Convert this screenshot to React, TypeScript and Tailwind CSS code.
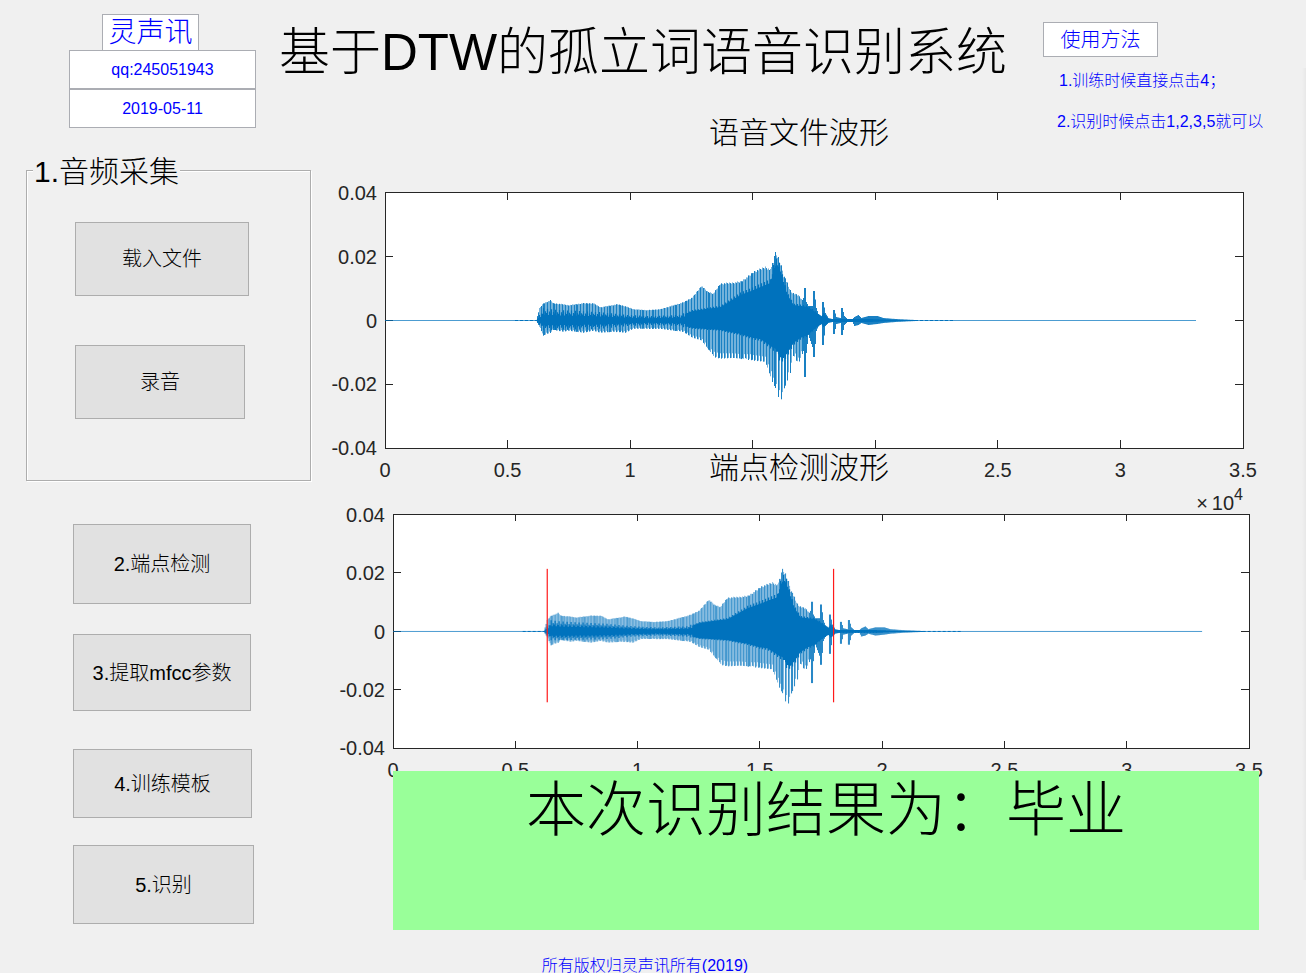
import { ReactNode } from "react"
import clsx from "clsx"

const W = 858
const H = 256
const MID = 128

const xTicks = ["0", "0.5", "1", "1.5", "2", "2.5", "3", "3.5"]
const yTicks = ["0.04", "0.02", "0", "-0.02", "-0.04"]

// [x, height above zero, depth below zero]
type Point = [number, number, number]

const outer: Point[] = [
  [0, 0, 0], [151, 0, 0], [154, 12, 6], [158, 17, 15], [165, 20, 12], [168, 17, 9],
  [178, 16, 11], [183, 15, 10], [197, 17, 12], [208, 17, 10], [215, 13, 12], [232, 16, 11],
  [240, 14, 12], [248, 11, 8], [262, 10, 8], [275, 11, 8], [288, 15, 10], [298, 18, 11],
  [307, 23, 17], [316, 35, 20], [322, 29, 28], [328, 27, 36], [335, 37, 38], [348, 38, 38],
  [355, 39, 39], [365, 46, 39], [368, 49, 40], [380, 54, 42], [385, 51, 57], [388, 60, 63],
  [390, 68, 67], [391, 68, 70], [393, 63, 76], [397, 52, 79], [398, 45, 70], [401, 40, 62],
  [405, 30, 52], [408, 27, 35], [413, 25, 43], [417, 20, 33], [418, 22, 30], [419, 32, 56],
  [420, 32, 56], [421, 18, 32], [423, 14, 14], [427, 14, 26], [428, 29, 36], [429, 29, 36],
  [431, 12, 10], [433, 6, 5], [436, 4, 3], [437, 18, 24], [438, 18, 24], [440, 7, 5],
  [443, 2, 2], [447, 1, 1], [448, 10, 13], [449, 10, 13], [451, 3, 3], [455, 2, 2],
  [456, 12, 14], [457, 12, 14], [459, 4, 4], [462, 1, 1], [467, 1, 1], [469, 3, 5],
  [473, 5, 4], [476, 2, 2], [483, 4, 4], [492, 4, 3], [498, 2, 2], [510, 1, 1], [530, 0, 0], [811, 0, 0],
]

const inner: Point[] = [
  [0, 0, 0], [151, 0, 0], [158, 9, 7], [168, 8, 7], [215, 6, 6], [240, 4, 4], [265, 3, 3],
  [295, 4, 4], [307, 9, 7], [335, 13, 9], [355, 25, 13], [368, 30, 17], [375, 33, 18],
  [385, 37, 25], [388, 50, 27], [391, 56, 28], [394, 52, 36], [398, 38, 37], [402, 25, 32],
  [408, 15, 22], [415, 14, 17], [422, 13, 14], [430, 8, 7], [436, 3, 3], [438, 7, 6],
  [443, 1, 1], [483, 1, 1], [510, 0, 0], [811, 0, 0],
]

function sample(points: Point[], x: number) {
  let i = 1
  while (i < points.length - 1 && points[i][0] < x) i++
  const [x0, up0, down0] = points[i - 1]
  const [x1, up1, down1] = points[i]
  const t = (x - x0) / (x1 - x0)
  return [up0 + (up1 - up0) * t, down0 + (down1 - down0) * t]
}

// One vertical stroke per column: strong peaks, softer ones between them, and a solid core
function buildWave() {
  let strong = ""
  let soft = ""
  let core = ""
  for (let x = 152; x <= 530; x++) {
    const [up, down] = sample(outer, x)
    const [coreUp, coreDown] = sample(inner, x)
    const jitter = 1 - ((x * 37) % 11) / 220
    const px = x + 0.5
    const stroke = (u: number, d: number) => `M${px} ${(MID - u).toFixed(1)}V${(MID + d + 1).toFixed(1)}`
    const isPeak = x % 3 === 0 || x % 11 === 4 || up < 5 || x > 417
    if (isPeak) strong += stroke(x > 386 ? up : up * jitter, x > 386 ? down : down * jitter)
    else if (x > 386 && x < 409) soft += stroke(up * 0.95, down * (x % 3 === 1 ? 0.9 : 0.4))
    else soft += stroke(up * jitter, down * (x % 3 === 1 ? 0.97 : 0.85))
    // the quiet lead-in is striped rather than solid
    const scale = x < 300 ? [1, 0.6, 1.3, 0.8][(x * 7) % 4] : [1, 1.1, 1][x % 3]
    core += stroke(coreUp * scale, coreDown * scale)
  }
  return { strong, soft, core }
}

const wave = buildWave()

function Axes({ markers = [] }: { markers?: number[] }) {
  let ticks = ""
  for (let i = 1; i < 7; i++) {
    const x = (i * W) / 7
    ticks += `M${x} 0V8M${x} ${H}V${H - 8}`
  }
  for (let i = 1; i < 4; i++) {
    const y = (i * H) / 4
    ticks += `M0 ${y}H8M${W} ${y}H${W - 8}`
  }
  return (
    <svg
      viewBox={`0 0 ${W} ${H}`}
      preserveAspectRatio="none"
      className="block h-full w-full overflow-visible bg-white"
      fill="none"
      strokeWidth={1}
      aria-hidden="true"
    >
      <g stroke="#262626" shapeRendering="crispEdges">
        <path d={`M0 0H${W}V${H}H0Z`} vectorEffect="non-scaling-stroke" />
        <path d={ticks} vectorEffect="non-scaling-stroke" />
      </g>
      <g stroke="#0072bd">
        <path d={`M0 ${MID + 0.5}H811`} vectorEffect="non-scaling-stroke" strokeOpacity={0.7} />
        <path d={`M130 ${MID + 0.5}H570`} vectorEffect="non-scaling-stroke" strokeDasharray="3 2" />
        <path d={wave.soft} strokeOpacity={0.55} />
        <path d={wave.strong} strokeOpacity={0.9} />
        <path d={wave.core} strokeWidth={1.2} />
      </g>
      {markers.map((x) => (
        <rect key={x} x={x} y={60} width={1.2} height={146} fill="#ff1a1a" />
      ))}
    </svg>
  )
}

type PlotProps = {
  height: string
  markers?: number[]
  labels?: string[]
  exponent?: ReactNode
}

function Plot({ height, markers, labels = xTicks, exponent }: PlotProps) {
  return (
    <div className="flex text-[20px] leading-6 text-[#262626]">
      <div className={clsx("flex w-[73px] shrink-0 flex-col justify-between pr-2 text-right", height)}>
        {yTicks.map((t) => (
          <span key={t} className="flex h-0 items-center justify-end pt-px">{t}</span>
        ))}
      </div>
      <div className="min-w-0 flex-1">
        <div className={height}>
          <Axes markers={markers} />
        </div>
        <div className="flex h-9 justify-between pt-[10px]">
          {labels.map((t, i) => (
            <span key={i} className="flex w-0 justify-center">{t}</span>
          ))}
        </div>
        {exponent}
      </div>
    </div>
  )
}

function PushButton({ className, children }: { className: string; children: ReactNode }) {
  return (
    <button
      type="button"
      className={clsx(
        "block border border-[#adadad] bg-[#e1e1e1] text-center text-[20px] text-black hover:border-[#0078d7] hover:bg-[#e5f1fb]",
        className,
      )}
    >
      {children}
    </button>
  )
}

export default function App() {
  return (
    <div className="relative flex min-h-screen flex-col overflow-x-hidden bg-[#f0f0f0] font-['Liberation_Sans','Noto_Sans_CJK_SC',sans-serif] font-light text-black">
      {/* Header */}
      <header className="flex h-[150px] items-start">
        <div className="ml-[69px] flex w-[187px] shrink-0 flex-col pt-[14px] text-center text-[16px] text-[#0000ff]">
          <div className="mx-auto -mb-px h-[37px] w-[97px] -translate-x-3 border border-[#abadb3] bg-white text-[28px] leading-9">
            灵声讯
          </div>
          <div className="h-[39px] border border-[#abadb3] bg-white leading-[38px]">qq:245051943</div>
          <div className="h-[39px] border border-[#abadb3] bg-white leading-[38px]">2019-05-11</div>
        </div>
        <div className="flex flex-1 flex-col pt-[21px]">
          <h1 className="text-center text-[51px] leading-[64px] whitespace-nowrap">基于DTW的孤立词语音识别系统</h1>
          <h2 className="mt-7 ml-[453px] text-[30px] leading-10 whitespace-nowrap">语音文件波形</h2>
        </div>
        <div className="w-[276px] shrink-0 pt-[22px] pl-[13px] text-[16px] text-[#0000ff]">
          <div className="h-[35px] w-[115px] border border-[#abadb3] bg-white text-center text-[20px] leading-[34px]">
            使用方法
          </div>
          <p className="mt-3 ml-4 leading-6">1.训练时候直接点击4；</p>
          <p className="mt-[17px] ml-[14px] leading-6 whitespace-nowrap">2.识别时候点击1,2,3,5就可以</p>
        </div>
      </header>

      <div className="flex flex-1">
        {/* Controls */}
        <aside className="w-[312px] shrink-0">
          <fieldset className="mr-px ml-[26px] h-[331px] border border-[#adadad] pl-12 shadow-[1px_1px_0_#fff,inset_1px_1px_0_#fff]">
            <legend className="-ml-[42px] bg-[#f0f0f0] px-px pt-1 text-[30px] leading-9">1.音频采集</legend>
            <PushButton className="mt-8 h-[74px] w-[174px]">载入文件</PushButton>
            <PushButton className="mt-[49px] h-[74px] w-[170px]">录音</PushButton>
          </fieldset>
          <div className="mt-[43px] ml-[73px]">
            <PushButton className="h-20 w-[178px]">2.端点检测</PushButton>
            <PushButton className="mt-[30px] h-[77px] w-[178px]">3.提取mfcc参数</PushButton>
            <PushButton className="mt-[38px] h-[69px] w-[179px]">4.训练模板</PushButton>
            <PushButton className="mt-[27px] h-[79px] w-[181px]">5.识别</PushButton>
          </div>
        </aside>

        {/* Plots and result */}
        <main className="min-w-0 flex-1 pt-[42px]">
          <section className="relative pr-[63px]">
            {/* the next plot's title sits where 1.5 and 2 would be */}
            <Plot
              height="h-64"
              labels={xTicks.map((t) => (t === "1.5" || t === "2" ? "" : t))}
              exponent={
                <div className="flex h-[30px] items-center justify-end pt-2">
                  <span className="mr-1">×</span>10<sup className="text-[16px]">4</sup>
                </div>
              }
            />
            <h2 className="absolute top-[258px] left-[388px] w-[198px] text-center text-[30px] leading-9">
              端点检测波形
            </h2>
          </section>
          <section className="pr-[57px] pl-2">
            <Plot height="h-[234px]" markers={[154, 441]} />
          </section>
          <output className="relative -mt-[13px] mr-[47px] ml-[81px] block h-[159px] bg-[#99ff99] text-center text-[60px] leading-[80px]">
            本次识别结果为：毕业
          </output>
        </main>
      </div>

      <footer className="h-5 pr-4 text-center text-[16px] leading-[26px] text-[#0000ff]">所有版权归灵声讯所有(2019)</footer>

      {/* Faint shadow on the window's right edge */}
      <div className="absolute top-[68px] right-0 bottom-[93px] w-1 bg-linear-to-r from-[#f0f0f0] to-[#e8e8e8]" />
    </div>
  )
}
